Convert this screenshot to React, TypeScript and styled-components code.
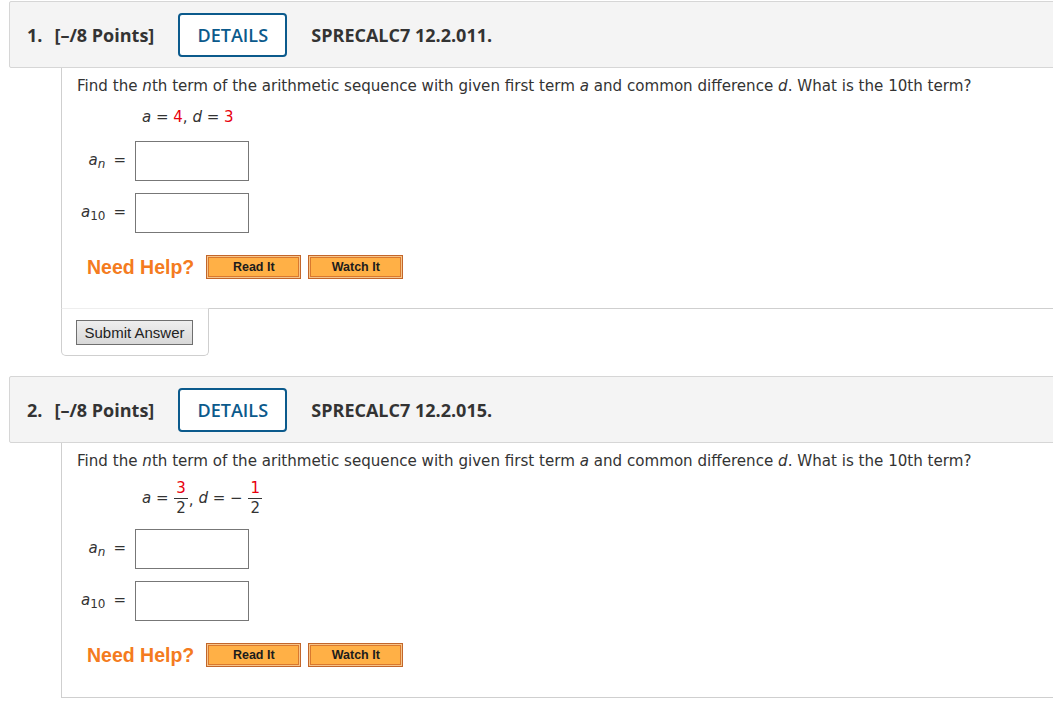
import { createGlobalStyle, styled } from "styled-components";

const GlobalStyle = createGlobalStyle`
  html, body {
    margin: 0;
    padding: 0;
    background: #fff;
    overflow: hidden;
  }
  body {
    font-family: "DejaVu Sans", Verdana, sans-serif;
    color: #333;
  }
`;

const Page = styled.div`
  width: 1100px;
  padding: 1px 0 0 9px;
`;

const Question = styled.section`
  margin-bottom: 20px;
`;

const Header = styled.div`
  height: 65px;
  display: flex;
  align-items: center;
  background: #f4f4f4;
  border: 1px solid #d6d6d6;
  border-radius: 2px;
  padding-left: 17px;
  font-family: "Open Sans", "Liberation Sans", sans-serif;
  font-weight: 700;
  font-size: 18px;
  color: #333;
`;

const Number = styled.span`
  margin-right: 12px;
`;

const DetailsButton = styled.button`
  width: 109px;
  height: 44px;
  margin-left: 24px;
  margin-right: 24px;
  border: 2px solid #0b5a8c;
  border-radius: 4px;
  background: #fff;
  color: #0b5a8c;
  font-family: "Open Sans", "Liberation Sans", sans-serif;
  font-size: 18px;
  font-weight: 600;
`;

const Body = styled.div<{ $last?: boolean }>`
  margin-left: 52px;
  border-left: 1px solid #cfcfcf;
  border-bottom: 1px solid #cfcfcf;
  padding: 8px 0 0 15px;
  height: ${(p) => (p.$last ? "246px" : "232px")};
  box-sizing: content-box;
`;

const Prompt = styled.p`
  margin: 0;
  font-size: 15.1px;
  line-height: 20px;
`;

const Var = styled.i`
  font-style: italic;
`;

const Given = styled.div`
  margin: 11px 0 14px 65px;
  font-size: 15px;
  line-height: 20px;
  white-space: pre;
`;

const GivenFrac = styled.div`
  display: flex;
  align-items: center;
  margin: 9px 0 13px 65px;
  height: 36px;
  font-size: 15px;
  white-space: pre;
`;

const Red = styled.span`
  color: #e8000d;
`;

const Frac = styled.span`
  display: inline-flex;
  flex-direction: column;
  align-items: center;
  line-height: 17px;
  font-size: 15px;
  margin: 0 1px;
`;

const Num = styled.span`
  color: #e8000d;
  padding: 0 2px 1px;
  border-bottom: 1px solid #333;
`;

const Den = styled.span`
  padding: 1px 2px 0;
`;

const Comma = styled.span`
  align-self: flex-end;
  margin-bottom: 7px;
`;

const AnswerRow = styled.div`
  display: flex;
  align-items: center;
  margin-bottom: 12px;
`;

const Label = styled.span`
  width: 49px;
  text-align: right;
  margin-right: 9px;
  font-size: 15px;
  white-space: nowrap;
`;

const Sub = styled.sub<{ $italic?: boolean }>`
  font-size: 12px;
  font-style: ${(p) => (p.$italic ? "italic" : "normal")};
  vertical-align: -3px;
`;

const Eq = styled.span`
  margin-left: 8px;
`;

const AnswerBox = styled.input`
  width: 112px;
  height: 38px;
  margin: 0;
  padding: 0;
  border: 1px solid #777;
  background: #fff;
`;

const HelpRow = styled.div`
  display: flex;
  align-items: center;
  margin: 22px 0 0 10px;
  gap: 7px;
`;

const NeedHelp = styled.span`
  font-family: "Liberation Sans", Arial, sans-serif;
  font-weight: 700;
  font-size: 19.5px;
  color: #f47b20;
  margin-right: 5px;
`;

const HelpButton = styled.button`
  width: 95px;
  height: 24px;
  padding: 0;
  border: 1px solid #c3662a;
  background: #ffb046;
  box-shadow: inset 0 0 0 1px #f5c58a, inset 0 0 0 2px #d9782e;
  font-family: "Liberation Sans", Arial, sans-serif;
  font-weight: 700;
  font-size: 12.5px;
  color: #1c1c1c;
`;

const SubmitArea = styled.div`
  width: 132px;
  height: 35px;
  margin-left: 52px;
  margin-top: -1px;
  border: 1px solid #cfcfcf;
  border-top-color: #eeeeee;
  border-radius: 0 0 5px 5px;
  padding: 11px 0 0 14px;
`;

const SubmitButton = styled.button`
  width: 117px;
  height: 25px;
  padding: 0;
  border: 1px solid #6f6f6f;
  background: linear-gradient(#eeeeee, #d8d8d8);
  font-family: "Liberation Sans", Arial, sans-serif;
  font-size: 15px;
  color: #222;
`;

function Answers() {
  return (
    <>
      <AnswerRow>
        <Label>
          <Var>a</Var>
          <Sub $italic>n</Sub>
          <Eq>=</Eq>
        </Label>
        <AnswerBox />
      </AnswerRow>
      <AnswerRow>
        <Label>
          <Var>a</Var>
          <Sub>10</Sub>
          <Eq>=</Eq>
        </Label>
        <AnswerBox />
      </AnswerRow>
      <HelpRow>
        <NeedHelp>Need Help?</NeedHelp>
        <HelpButton>Read It</HelpButton>
        <HelpButton>Watch It</HelpButton>
      </HelpRow>
    </>
  );
}

function QuestionHeader({ num, code }: { num: number; code: string }) {
  return (
    <Header>
      <Number>{num}.</Number>
      <span>[–/8 Points]</span>
      <DetailsButton>DETAILS</DetailsButton>
      <span>{code}</span>
    </Header>
  );
}

const promptText = (
  <Prompt>
    Find the <Var>n</Var>th term of the arithmetic sequence with given first
    term <Var>a</Var> and common difference <Var>d</Var>. What is the 10th
    term?
  </Prompt>
);

export default function App() {
  return (
    <Page>
      <GlobalStyle />
      <Question>
        <QuestionHeader num={1} code="SPRECALC7 12.2.011." />
        <Body>
          {promptText}
          <Given>
            <Var>a</Var> = <Red>4</Red>, <Var>d</Var> = <Red>3</Red>
          </Given>
          <Answers />
        </Body>
        <SubmitArea>
          <SubmitButton>Submit Answer</SubmitButton>
        </SubmitArea>
      </Question>
      <Question>
        <QuestionHeader num={2} code="SPRECALC7 12.2.015." />
        <Body $last>
          {promptText}
          <GivenFrac>
            <Var>a</Var>
            {" = "}
            <Frac>
              <Num>3</Num>
              <Den>2</Den>
            </Frac>
            <Comma>, </Comma>
            <Var>d</Var>
            {" = − "}
            <Frac>
              <Num>1</Num>
              <Den>2</Den>
            </Frac>
          </GivenFrac>
          <Answers />
        </Body>
      </Question>
    </Page>
  );
}
